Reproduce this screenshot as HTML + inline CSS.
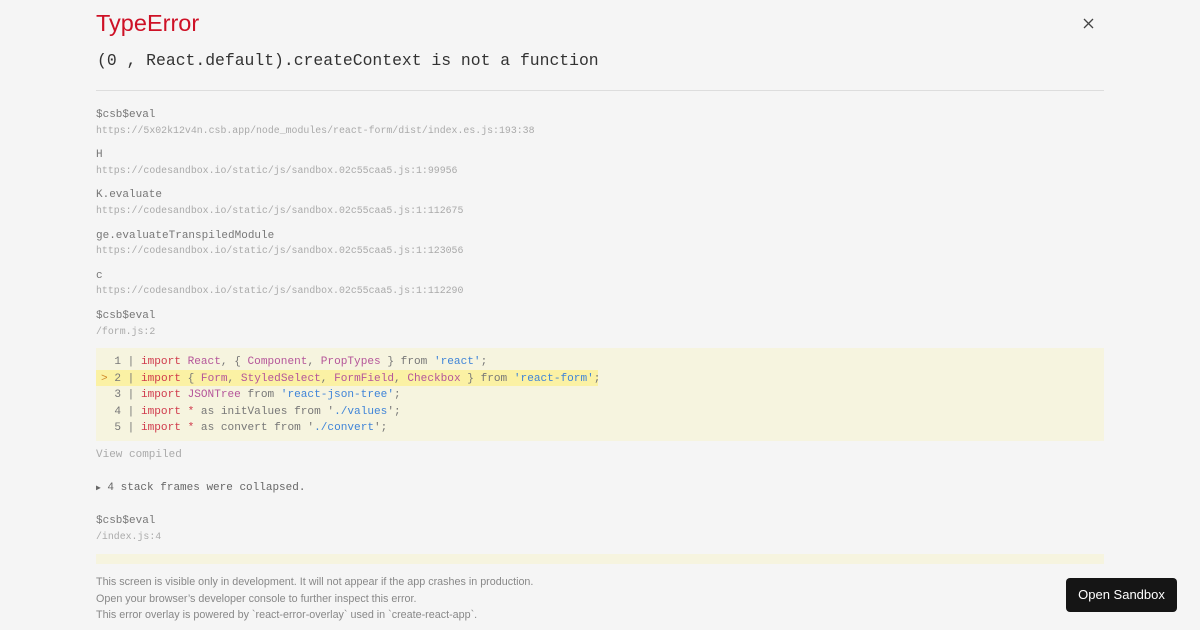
<!DOCTYPE html>
<html><head><meta charset="utf-8"><style>
body{margin:0;width:1200px;height:630px;background:#f5f5f5;position:relative;overflow:hidden;font-family:"Liberation Sans",sans-serif}
.a{position:absolute;white-space:pre}
.m{font-family:"Liberation Mono",monospace}
.fn{font-size:11px;color:#777}
.url{font-size:9.9px;color:#aaa}
.code{font-size:11.1px;color:#777}
.k{color:#d03a4c}.p{color:#b5569a}.s{color:#3f84d8}
</style></head><body>
<div class="a" style="left:96px;top:10px;font-size:23.5px;color:#ce1126">TypeError</div>
<svg class="a" style="left:1083px;top:18px" width="11" height="11" viewBox="0 0 11 11"><path d="M1 1L10 10M10 1L1 10" stroke="#444" stroke-width="1.3"/></svg>
<div class="a m" style="left:97px;top:51px;font-size:16.4px;color:#333">(0 , React.default).createContext is not a function</div>
<div class="a" style="left:96px;top:90px;width:1008px;height:1px;background:#ddd"></div>

<div class="a m fn" style="left:96px;top:109px">$csb$eval</div>
<div class="a m url" style="left:96px;top:125px">https://5x02k12v4n.csb.app/node_modules/react-form/dist/index.es.js:193:38</div>
<div class="a m fn" style="left:96px;top:149px">H</div>
<div class="a m url" style="left:96px;top:165px">https://codesandbox.io/static/js/sandbox.02c55caa5.js:1:99956</div>
<div class="a m fn" style="left:96px;top:189px">K.evaluate</div>
<div class="a m url" style="left:96px;top:205px">https://codesandbox.io/static/js/sandbox.02c55caa5.js:1:112675</div>
<div class="a m fn" style="left:96px;top:230px">ge.evaluateTranspiledModule</div>
<div class="a m url" style="left:96px;top:245px">https://codesandbox.io/static/js/sandbox.02c55caa5.js:1:123056</div>
<div class="a m fn" style="left:96px;top:270px">c</div>
<div class="a m url" style="left:96px;top:285px">https://codesandbox.io/static/js/sandbox.02c55caa5.js:1:112290</div>
<div class="a m fn" style="left:96px;top:310px">$csb$eval</div>
<div class="a m url" style="left:96px;top:326px">/form.js:2</div>

<div class="a" style="left:96px;top:348px;width:1008px;height:93px;background:#f6f4df"></div>
<div class="a" style="left:96px;top:370px;width:502px;height:16px;background:#fbf1a4"></div>
<div class="a m code" style="left:101px;top:354px;line-height:16.6px">  1 | <span class="k">import</span> <span class="p">React</span>, { <span class="p">Component</span>, <span class="p">PropTypes</span> } from <span class="s">'react'</span>;
<span style="color:#d08a2a">&gt;</span> 2 | <span class="k">import</span> { <span class="p">Form</span>, <span class="p">StyledSelect</span>, <span class="p">FormField</span>, <span class="p">Checkbox</span> } from <span class="s">'react-form'</span>;
  3 | <span class="k">import</span> <span class="p">JSONTree</span> from <span class="s">'react-json-tree'</span>;
  4 | <span class="k">import</span> <span class="k">*</span> as initValues from '<span class="s">./values</span>';
  5 | <span class="k">import</span> <span class="k">*</span> as convert from '<span class="s">./convert</span>';</div>

<div class="a m fn" style="left:96px;top:449px;color:#aaa">View compiled</div>
<div class="a m fn" style="left:96px;top:482px;color:#666"><span style="font-size:8px">▶</span> 4 stack frames were collapsed.</div>
<div class="a m fn" style="left:96px;top:515px">$csb$eval</div>
<div class="a m url" style="left:96px;top:531px">/index.js:4</div>
<div class="a" style="left:96px;top:554px;width:1008px;height:10px;background:#f6f4df"></div>

<div class="a" style="left:96px;top:574px;font-size:10.75px;line-height:16.5px;color:#888">This screen is visible only in development. It will not appear if the app crashes in production.
Open your browser’s developer console to further inspect this error.
This error overlay is powered by `react-error-overlay` used in `create-react-app`.</div>
<div class="a" style="left:1066px;top:578px;width:111px;height:34px;background:#151515;border-radius:4px;color:#fff;font-size:13px;line-height:34px;text-align:center">Open Sandbox</div>
</body></html>
